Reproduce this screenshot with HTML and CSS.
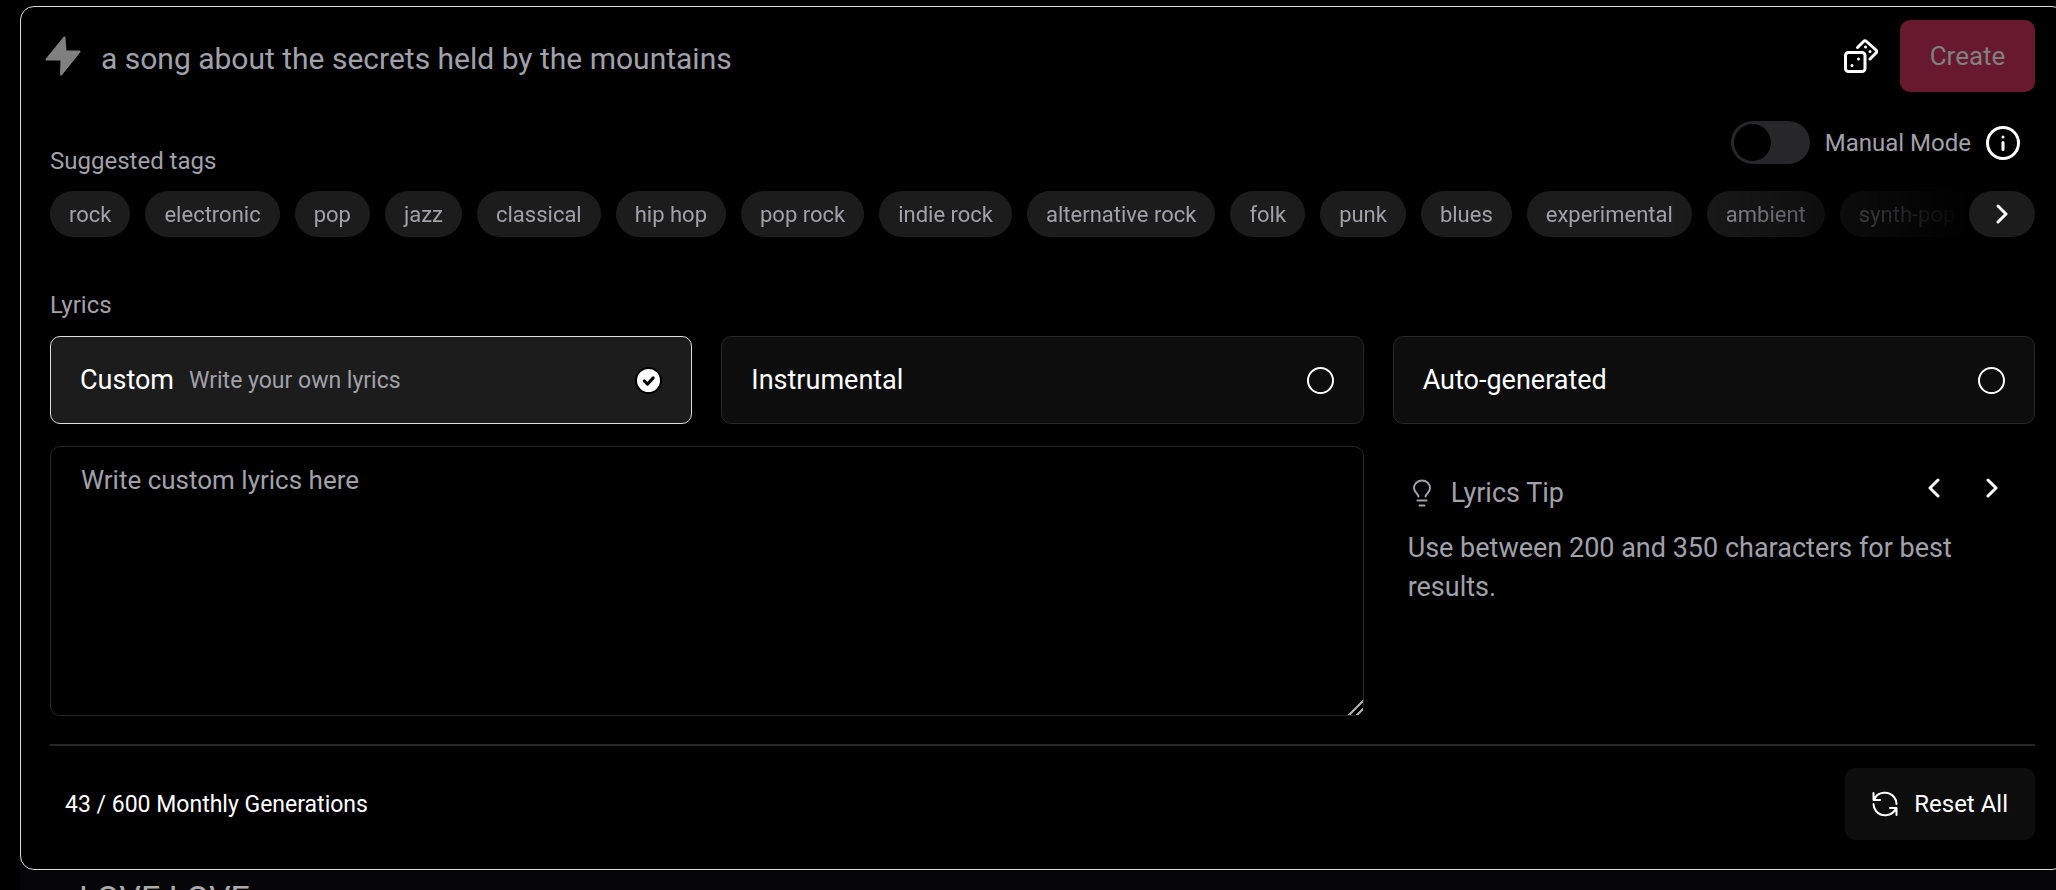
FILE: index.html
```html
<!DOCTYPE html>
<html lang="en">
<head>
    <meta charset="UTF-8">
    <meta name="viewport" content="width=device-width, initial-scale=1">
    <title>Create</title>
    <link rel="stylesheet" href="styles.css">
</head>

<body>
    <main class="page">
        <form class="panel">
            <div class="prompt-row">
                <svg class="bolt" viewBox="0 0 36 40" aria-hidden="true">
                    <path d="M19.500 1.500L1.500 23.500h15l-.500 15L34.500 15.500h-14z"/>
                </svg>
                <input class="prompt" type="text" aria-label="Song description" placeholder="a song about the secrets held by the mountains">
                <button class="icon-button" type="button" aria-label="Random prompt">
                    <svg class="dice" viewBox="0 0 34 34" aria-hidden="true">
                        <rect x="1.5" y="13.5" width="19.5" height="19" rx="3"/>
                        <path d="M13.500 8.500l6-6q1.500-1.500 3 0l9.500 8.500q1.500 1.500 0 3l-6 6"/>
                        <path d="M8 26.500h.01M14.500 20h.01M21.500 8h.01M26 12.500h.01"/>
                    </svg>
                </button>
                <button class="create" type="submit" disabled>Create</button>
            </div>

            <div class="tags-header">
                <h2 class="section-title">Suggested tags</h2>
                <div class="mode">
                    <input class="switch" type="checkbox" id="manual">
                    <label for="manual">Manual Mode</label>
                    <button class="icon-button" type="button" aria-label="About manual mode">
                        <svg class="info" viewBox="0 0 34 34" aria-hidden="true">
                            <circle cx="17" cy="17" r="15.500"/>
                            <path d="M17 16.500v7M17 11h.01"/>
                        </svg>
                    </button>
                </div>
            </div>

            <div class="tags">
                <div class="tag-list">
                    <button class="tag" type="button">rock</button>
                    <button class="tag" type="button">electronic</button>
                    <button class="tag" type="button">pop</button>
                    <button class="tag" type="button">jazz</button>
                    <button class="tag" type="button">classical</button>
                    <button class="tag" type="button">hip hop</button>
                    <button class="tag" type="button">pop rock</button>
                    <button class="tag" type="button">indie rock</button>
                    <button class="tag" type="button">alternative rock</button>
                    <button class="tag" type="button">folk</button>
                    <button class="tag" type="button">punk</button>
                    <button class="tag" type="button">blues</button>
                    <button class="tag" type="button">experimental</button>
                    <button class="tag" type="button">ambient</button>
                    <button class="tag" type="button">synth-pop</button>
                </div>
                <button class="tag-next" type="button" aria-label="More tags">
                    <svg class="chevron" viewBox="0 0 12 20" aria-hidden="true"><path d="M2 2l8 8-8 8"/></svg>
                </button>
            </div>

            <h2 class="section-title lyrics-title">Lyrics</h2>
            <div class="lyrics">
                <label class="option">
                    <span class="option-name">Custom</span>
                    <span class="option-hint">Write your own lyrics</span>
                    <input class="radio" type="radio" name="lyrics" checked>
                    <svg class="check" viewBox="0 0 26 26" aria-hidden="true"><path d="M9 13.500l3 3 5.500-6"/></svg>
                </label>
                <label class="option">
                    <span class="option-name">Instrumental</span>
                    <input class="radio" type="radio" name="lyrics">
                </label>
                <label class="option">
                    <span class="option-name">Auto-generated</span>
                    <input class="radio" type="radio" name="lyrics">
                </label>

                <textarea class="lyrics-text" aria-label="Custom lyrics" placeholder="Write custom lyrics here"></textarea>
                <section class="tip">
                    <div class="tip-header">
                        <svg class="bulb" viewBox="0 0 20 28" aria-hidden="true">
                            <path d="M6.500 17.500C6 14.500 2 13 2 9a8 7.500 0 0 1 16 0C18 13 14 14.500 13.500 17.500M5.500 21.500h9M7.500 26.500h5"/>
                        </svg>
                        <h3 class="tip-title">Lyrics Tip</h3>
                        <div class="tip-nav">
                            <button class="icon-button" type="button" aria-label="Previous tip">
                                <svg class="chevron" viewBox="0 0 12 20" aria-hidden="true"><path d="M10 2l-8 8 8 8"/></svg>
                            </button>
                            <button class="icon-button" type="button" aria-label="Next tip">
                                <svg class="chevron" viewBox="0 0 12 20" aria-hidden="true"><path d="M2 2l8 8-8 8"/></svg>
                            </button>
                        </div>
                    </div>
                    <p class="tip-text">Use between 200 and 350 characters for best results.</p>
                </section>
            </div>

            <div class="footer">
                <span class="usage">43 / 600 Monthly Generations</span>
                <button class="reset" type="reset">
                    <svg class="refresh" viewBox="0 0 26 26" aria-hidden="true">
                        <path d="M1.500 2v7H8M2 8.500C6 0 17 0 22 6q2.500 3 2.500 7M24.500 24v-7H18M24 17.500C20 26 9 26 4 20q-2.500-3-2.500-7"/>
                    </svg>
                    Reset All
                </button>
            </div>
        </form>
        <h2 class="song">LOVE LOVE</h2>
    </main>
</body>

</html>
```

FILE: styles.css
```css
* {
    box-sizing: border-box;
}
body {
    margin: 0;
    background: #000;
    color: #fff;
    font-family: Roboto, "Liberation Sans", sans-serif;
    overflow: hidden;
}
button, input, textarea {
    font: inherit;
    color: inherit;
}
button {
    border: none;
    cursor: pointer;
}
h2, h3, p {
    margin: 0;
    font-weight: 400;
}
svg {
    display: block;
    fill: none;
    stroke: currentColor;
    stroke-width: 3;
    stroke-linecap: round;
    stroke-linejoin: round;
}
.page {
    height: 100vh;
    margin: 0 -10px 0 20px;
    padding-top: 6px;
    background: linear-gradient(#000 50%, #050507 50%);
    overflow: hidden;
}

.panel {
    padding: 13px 30px 29px 29px;
    border: 1px solid #ddd;
    border-radius: 14px;
    background: #000;
}
.icon-button {
    padding: 0;
    background: none;
}

/* prompt */
.prompt-row {
    display: flex;
    align-items: center;
    height: 72px;
    margin-left: -5px;
}
.bolt {
    width: 36px;
    height: 40px;
    fill: #808080;
    stroke: #808080;
    stroke-width: 2;
}
.prompt {
    flex: 1;
    height: 60px;
    margin: 0 20px;
    padding: 4px 0 0;
    border: none;
    outline: none;
    background: none;
    font-size: 30px;
}
.prompt::placeholder, .lyrics-text::placeholder {
    color: #a1a1aa;
}
.dice {
    width: 34px;
    height: 34px;
}
.create {
    width: 135px;
    height: 72px;
    margin-left: 22px;
    border-radius: 10px;
    background: #68192e;
    color: #808080;
    font-size: 26px;
}

/* tags */
.tags-header {
    display: flex;
    justify-content: space-between;
    align-items: flex-end;
    height: 54px;
    margin-top: 29px;
}
.section-title {
    color: #a1a1aa;
    font-size: 24px;
    line-height: 28px;
}
.mode {
    display: flex;
    align-items: center;
    align-self: flex-start;
    gap: 15px;
    margin-right: 15px;
    color: #a1a1aa;
    font-size: 24px;
}
.mode .icon-button {
    color: #fff;
}
.switch {
    appearance: none;
    width: 79px;
    height: 43px;
    margin: 0;
    padding: 3px;
    border-radius: 22px;
    background: #27272a;
}
.switch::before {
    content: "";
    display: block;
    width: 37px;
    height: 37px;
    border-radius: 50%;
    background: #000;
}
.switch:checked::before {
    margin-left: auto;
}
.info {
    width: 34px;
    height: 34px;
}
.tags {
    display: flex;
    margin-top: 16px;
}
.tag-list {
    display: flex;
    flex: 1;
    gap: 15px;
    min-width: 0;
    overflow: hidden;
    mask-image: linear-gradient(to right, #000 calc(100% - 300px), transparent);
}
.tag {
    flex: none;
    height: 46px;
    padding: 0 19px;
    border-radius: 23px;
    background: #1c1c1c;
    color: #a1a1aa;
    font-size: 22px;
}
.tag-next {
    display: grid;
    place-items: center;
    width: 66px;
    height: 46px;
    border-radius: 23px;
    background: #1c1c1c;
}
.chevron {
    width: 12px;
    height: 20px;
}

/* lyrics */
.lyrics-title {
    margin-top: 54px;
}
.lyrics {
    display: grid;
    grid-template-columns: repeat(3, 1fr);
    gap: 22px 29px;
    margin-top: 17px;
}
.option {
    display: flex;
    position: relative;
    align-items: center;
    gap: 15px;
    height: 88px;
    padding: 0 29px;
    border: 1px solid #27272a;
    border-radius: 10px;
    background: #0d0d0d;
}
.option:has(:checked) {
    border-color: #ddd;
    background: #1c1c1c;
}
.option-name {
    font-size: 27px;
}
.option-hint {
    color: #a1a1aa;
    font-size: 23px;
}
.radio {
    appearance: none;
    width: 27px;
    height: 27px;
    margin: 0 0 0 auto;
    border: 2px solid #fff;
    border-radius: 50%;
}
.radio:checked {
    border-color: #000;
    background: #fff;
}
.check {
    position: absolute;
    right: 29px;
    width: 27px;
    height: 27px;
    color: #000;
}
.lyrics-text {
    grid-column: span 2;
    height: 270px;
    padding: 17px 30px;
    border: 1px solid #27272a;
    border-radius: 10px;
    outline: none;
    background: none;
    font-size: 26px;
    line-height: 32px;
    resize: vertical;
}
.lyrics-text::-webkit-resizer {
    background: linear-gradient(135deg, transparent 48%, #aaa 48% 58%, transparent 58% 76%, #aaa 76% 86%, transparent 86%);
}
.tip {
    padding: 22px 30px 0 15px;
    color: #a1a1aa;
    font-size: 27px;
}
.tip-header {
    display: flex;
    align-items: center;
    height: 50px;
}
.bulb {
    width: 20px;
    height: 28px;
    margin: 0 19px 0 4px;
    stroke-width: 2;
}
.tip-title {
    font-size: 27px;
    line-height: 50px;
}
.tip-nav {
    display: flex;
    gap: 46px;
    margin: 0 7px 10px auto;
    color: #fff;
}
.tip-text {
    margin-top: 11px;
    line-height: 39px;
}

/* footer */
.footer {
    display: flex;
    justify-content: space-between;
    align-items: center;
    margin-top: 28px;
    padding: 22px 0 0 15px;
    border-top: 2px solid #27272a;
}
.usage {
    font-size: 23px;
}
.reset {
    display: flex;
    align-items: center;
    gap: 16px;
    height: 72px;
    padding: 0 27px;
    border-radius: 10px;
    background: #0d0d0d;
    font-size: 24px;
}
.refresh {
    width: 26px;
    height: 26px;
    stroke-width: 2;
}
.song {
    padding: 8px 59px;
    color: #aaa;
    font-size: 34px;
}
```
